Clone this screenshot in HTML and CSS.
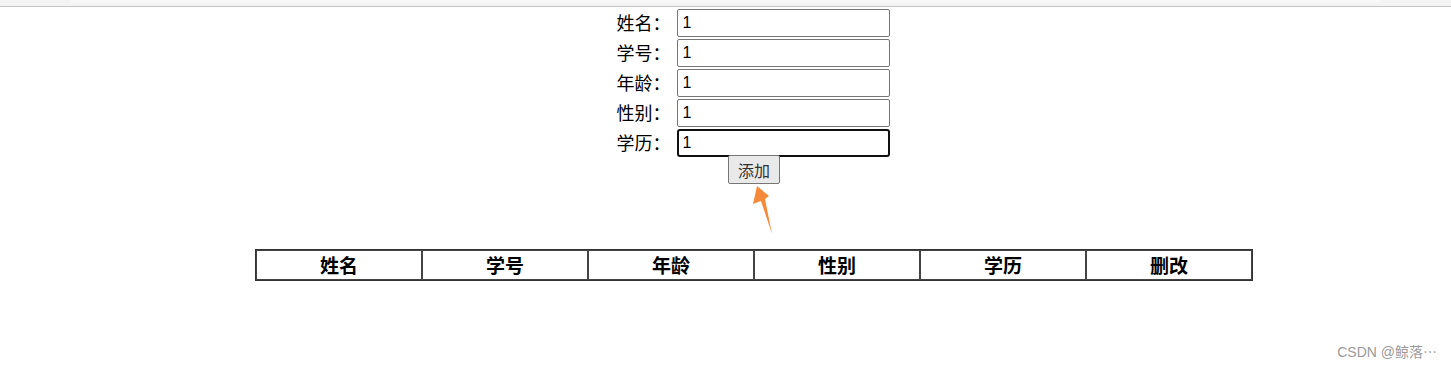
FILE: index.html
```html
<!DOCTYPE html>
<html>
	<head>
		<meta charset="utf-8" />
		<title>学生信息</title>
		<link rel="stylesheet" href="styles.css">
	</head>
	<body>
		<div class="topbar"><div class="topbar-inner"></div></div>

		<div class="main">
			<div class="form">
				<div class="fields">
					<div class="row"><label>姓名：</label><input type="text" value="1" /></div>
					<div class="row"><label>学号：</label><input type="text" value="1" /></div>
					<div class="row"><label>年龄：</label><input type="text" value="1" /></div>
					<div class="row"><label>性别：</label><input type="text" value="1" /></div>
					<div class="row"><label>学历：</label><input type="text" value="1" class="active" /></div>
				</div>
				<button class="add">添加</button>
			</div>

			<table class="list">
				<tr>
					<th>姓名</th>
					<th>学号</th>
					<th>年龄</th>
					<th>性别</th>
					<th>学历</th>
					<th>删改</th>
				</tr>
			</table>
		</div>

		<!-- 标注箭头 -->
		<svg class="arrow" width="30" height="52" viewBox="0 0 30 52">
			<polygon points="7,0 19,10 15,13 22,48 11,15 3,18" fill="#f58a3a" />
		</svg>

		<div class="mark">CSDN @鲸落⋯</div>
	</body>
</html>
```

FILE: styles.css
```css
body{
	margin: 0;
	font-family: "Liberation Sans", "Noto Sans CJK SC", sans-serif;
	color: #000;
	background-color: #fff;
}

.topbar{
	height: 6px;
	background-color: #f3f3f3;
	border-bottom: 1px solid #c4c4c4;
}

.topbar-inner{
	height: 3px;
	margin: 0 70px;
	background-color: #f8f8f8;
	border-radius: 0 0 4px 4px;
}

.main{
	width: 998px;
	margin-left: 255px;
}

.form{
	display: flex;
	flex-direction: column;
	align-items: center;
	margin-top: 2px;
}

.fields{
	display: flex;
	flex-direction: column;
	gap: 2px;
}

.row{
	display: flex;
	align-items: center;
}

.row label{
	width: 60px;
	margin-left: -2px;
	margin-top: -2px;
	font-family: "Noto Sans CJK SC", sans-serif;
	font-size: 18px;
	line-height: 24px;
}

.row input{
	width: 213px;
	height: 28px;
	box-sizing: border-box;
	border: 1px solid #767676;
	border-radius: 2px;
	padding: 0 5px;
	font-family: "Liberation Sans", sans-serif;
	font-size: 16px;
	color: #000;
	outline: none;
}

.row input.active{
	border: 2px solid #101010;
	border-radius: 3px;
	padding: 0 4px;
}

.add{
	width: 52px;
	height: 29px;
	margin-top: -2px;
	box-sizing: border-box;
	padding: 0;
	background-color: #e9e9e9;
	border: 1px solid #767676;
	border-radius: 2px;
	font-family: "Noto Sans CJK SC", sans-serif;
	font-size: 16px;
	color: #333;
}

.list{
	width: 998px;
	margin-top: 65px;
	border: 1px solid #333;
	border-spacing: 0;
	table-layout: fixed;
}

.list th{
	height: 30px;
	box-sizing: border-box;
	border: 1px solid #444;
	padding: 0;
	font-family: "Noto Sans CJK SC", sans-serif;
	font-size: 19px;
	font-weight: bold;
	line-height: 28px;
}

.arrow{
	position: absolute;
	left: 750px;
	top: 186px;
}

.mark{
	position: absolute;
	right: 14px;
	bottom: 8px;
	font-family: "Liberation Sans", "Noto Sans CJK SC", sans-serif;
	font-size: 14px;
	color: #9a9a9a;
}
```
